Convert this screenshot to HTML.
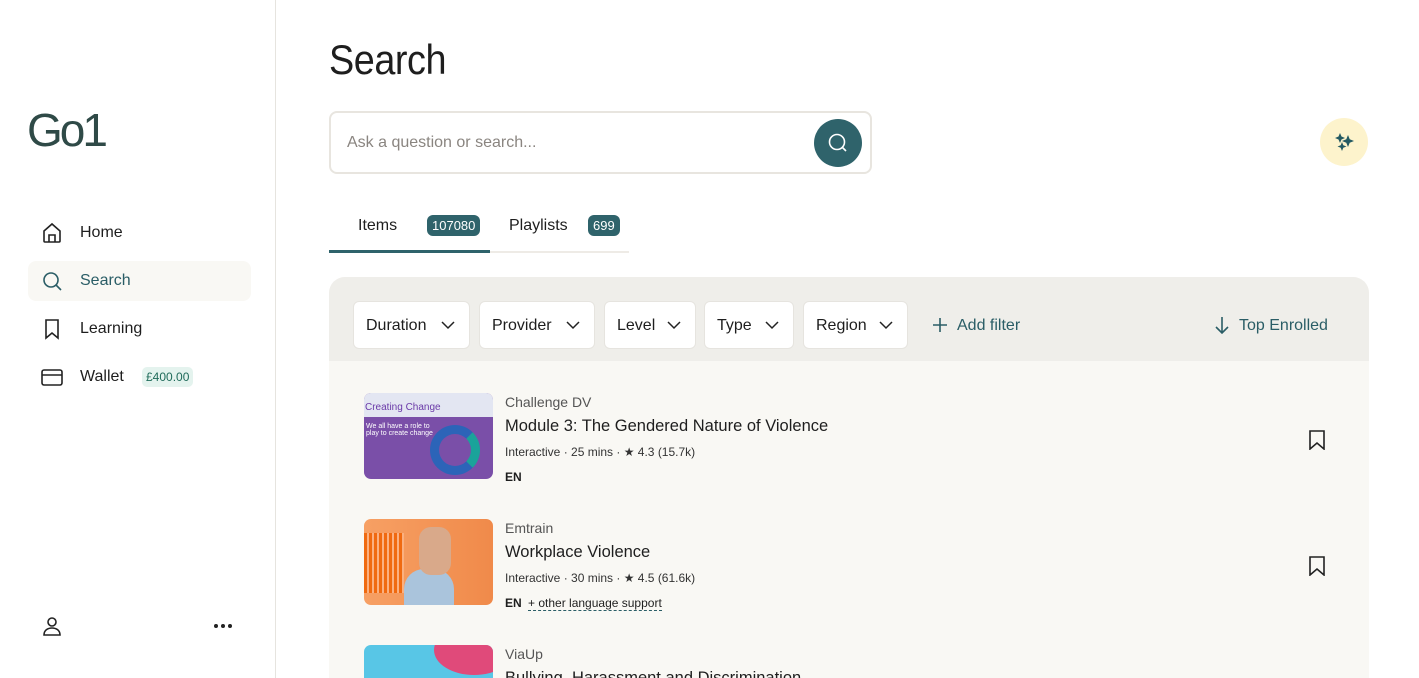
<!DOCTYPE html>
<html style="width:1419px;height:678px;overflow:hidden"><head><meta charset="utf-8"><style>
*{box-sizing:border-box;margin:0;padding:0}
body{width:1419px;height:678px;overflow:hidden;background:#fff;font-family:"Liberation Sans",sans-serif;color:#1e1e1e;position:relative}
.side{position:absolute;left:0;top:0;width:276px;height:678px;border-right:1px solid #e6e4df}
.logo{position:absolute;left:27px;top:103px;font-size:46px;color:#2f4a47;letter-spacing:-3px;font-weight:400}
.nav{position:absolute;left:28px;width:223px;height:40px;border-radius:8px;display:flex;align-items:center;font-size:16px}
.nav svg{position:absolute;left:12px}
.nav span.t{position:absolute;left:52px;top:11px}
.ab{position:absolute;}
h1{position:absolute;left:329px;top:36px;font-size:42px;font-weight:400;color:#1e1e1e;letter-spacing:-0.5px;transform:scaleX(.9);transform-origin:left}
.search{position:absolute;left:329px;top:111px;width:543px;height:63px;border:2px solid #e8e5df;border-radius:8px}
.search .ph{position:absolute;left:16px;top:21px;font-size:16px;color:#8a8580}
.search .btn{position:absolute;right:8px;top:6px;width:48px;height:48px;border-radius:50%;background:#2f636b}
.badge{background:#2f636b;color:#fff;font-size:13px;border-radius:6px;padding:3px 5px;position:absolute}
.panel{position:absolute;left:329px;top:277px;width:1040px;height:401px;border-radius:16px 16px 0 0;background:#f9f8f4;overflow:hidden}
.fbar{height:84px;background:#efeeea;position:relative}
.f{position:absolute;top:24px;height:48px;background:#fff;border:1px solid #e6e4df;border-radius:6px;font-size:16px;padding:0 0 0 12px;line-height:48px}
.f svg{position:absolute;right:14px;top:18px}
.item{position:absolute;left:35px}
.thumb{position:absolute;left:0;width:129px;height:86px;border-radius:7px;overflow:hidden}
.prov{position:absolute;left:141px;font-size:14px;color:#555}
.tit{position:absolute;left:141px;font-size:16.5px;color:#1e1e1e}
.meta{position:absolute;left:141px;font-size:12px;color:#333;white-space:nowrap}
.lang{position:absolute;left:141px;font-size:12px;font-weight:bold}
</style></head><body>
<div class="side">
 <div class="logo">Go1</div>
 <div class="nav" style="top:213px"><svg width="24" height="24" viewBox="0 0 24 24" fill="none" stroke="#222" stroke-width="1.6"><path d="M4 10l8-7 8 7v10a1 1 0 0 1-1 1H5a1 1 0 0 1-1-1z"/><path d="M9 21v-7h6v7"/></svg><span class="t">Home</span></div>
 <div class="nav" style="top:261px;background:#f9f8f4;color:#2a5d66"><svg width="24" height="24" viewBox="0 0 24 24" fill="none" stroke="#2a5d66" stroke-width="1.6"><circle cx="11" cy="11" r="7"/><path d="M16 16l5 5"/></svg><span class="t">Search</span></div>
 <div class="nav" style="top:309px"><svg width="24" height="24" viewBox="0 0 24 24" fill="none" stroke="#222" stroke-width="1.6"><path d="M6 3h12v18l-6-5-6 5z"/></svg><span class="t">Learning</span></div>
 <div class="nav" style="top:357px"><svg width="24" height="24" viewBox="0 0 24 24" fill="none" stroke="#222" stroke-width="1.6"><rect x="2" y="5" width="20" height="15" rx="2"/><path d="M2 10h20"/></svg><span class="t">Wallet</span><span style="position:absolute;left:114px;top:10px;background:#e4f3ee;color:#1f6b5a;font-size:12px;padding:3px 4px;border-radius:5px">£400.00</span></div>
 <svg class="ab" style="left:40px;top:614px" width="24" height="24" viewBox="0 0 24 24" fill="none" stroke="#222" stroke-width="1.6"><circle cx="12" cy="8" r="4"/><path d="M4 21c0-5 4-7 8-7s8 2 8 7z"/></svg>
 <svg class="ab" style="left:212px;top:620px" width="22" height="12"><circle cx="4" cy="6" r="2" fill="#222"/><circle cx="11" cy="6" r="2" fill="#222"/><circle cx="18" cy="6" r="2" fill="#222"/></svg>
</div>
<h1>Search</h1>
<div class="search"><div class="ph">Ask a question or search...</div><div class="btn"><svg width="48" height="48" viewBox="0 0 48 48" fill="none" stroke="#fff" stroke-width="1.6"><circle cx="23" cy="23" r="7.5"/><path d="M28.5 28.5l3.5 3.5"/></svg></div></div>
<div class="ab" style="left:1320px;top:118px;width:48px;height:48px;border-radius:50%;background:#fdf3cc"><svg width="48" height="48" viewBox="0 0 48 48" fill="#245a62"><path d="M20 15l1.5 3.5 3.5 1.5-3.5 1.5-1.5 3.5-1.5-3.5-3.5-1.5 3.5-1.5z"/><path d="M28 17l1.7 4.3 4.3 1.7-4.3 1.7-1.7 4.3-1.7-4.3-4.3-1.7 4.3-1.7z"/><path d="M22 24l1.3 3.2 3.2 1.3-3.2 1.3-1.3 3.2-1.3-3.2-3.2-1.3 3.2-1.3z"/></svg></div>
<div class="ab" style="left:358px;top:217px;font-size:16px">Items</div>
<div class="badge" style="left:427px;top:215px">107080</div>
<div class="ab" style="left:509px;top:217px;font-size:16px">Playlists</div>
<div class="badge" style="left:588px;top:215px">699</div>
<div class="ab" style="left:329px;top:251px;width:300px;height:2px;background:#eeebe6"></div>
<div class="ab" style="left:329px;top:250px;width:161px;height:3px;background:#2f636b"></div>
<div class="panel">
 <div class="fbar">
  <div class="f" style="left:24px;width:117px">Duration<svg width="14" height="10"><path d="M1 2l6 6 6-6" fill="none" stroke="#222" stroke-width="1.5"/></svg></div>
  <div class="f" style="left:150px;width:116px">Provider<svg width="14" height="10"><path d="M1 2l6 6 6-6" fill="none" stroke="#222" stroke-width="1.5"/></svg></div>
  <div class="f" style="left:275px;width:92px">Level<svg width="14" height="10"><path d="M1 2l6 6 6-6" fill="none" stroke="#222" stroke-width="1.5"/></svg></div>
  <div class="f" style="left:375px;width:90px">Type<svg width="14" height="10"><path d="M1 2l6 6 6-6" fill="none" stroke="#222" stroke-width="1.5"/></svg></div>
  <div class="f" style="left:474px;width:105px">Region<svg width="14" height="10"><path d="M1 2l6 6 6-6" fill="none" stroke="#222" stroke-width="1.5"/></svg></div>
  <svg class="ab" style="left:603px;top:40px" width="16" height="16" fill="none" stroke="#2a5d66" stroke-width="1.6"><path d="M8 1v14M1 8h14"/></svg>
  <div class="ab" style="left:628px;top:40px;font-size:16px;color:#2a5d66">Add filter</div>
  <svg class="ab" style="left:885px;top:39px" width="16" height="18" fill="none" stroke="#2a5d66" stroke-width="1.6"><path d="M8 1v16M2 11l6 6 6-6"/></svg>
  <div class="ab" style="left:910px;top:40px;font-size:16px;color:#2a5d66">Top Enrolled</div>
 </div>
 <div class="item" style="top:116px;width:1000px">
  <div class="thumb" style="top:0;background:#7a4fa8"><div style="height:24px;background:#e3e6f2;color:#6a3aa8;font-size:10px;padding:9px 0 0 1px">Creating Change</div><div style="position:absolute;left:66px;top:32px;width:50px;height:50px;border-radius:50%;border:9px solid #2c64b8;border-right-color:#1aa39a"></div><div style="position:absolute;left:2px;top:30px;color:#fff;font-size:7px">We all have a role to<br>play to create change</div></div>
  <div class="prov" style="top:1px">Challenge DV</div>
  <div class="tit" style="top:24px">Module 3: The Gendered Nature of Violence</div>
  <div class="meta" style="top:52px">Interactive · 25 mins · ★ 4.3 (15.7k)</div>
  <div class="lang" style="top:77px">EN</div>
  <svg class="ab" style="left:944px;top:37px" width="18" height="20" fill="none" stroke="#222" stroke-width="1.6"><path d="M2 1h14v18l-7-6-7 6z"/></svg>
 </div>
 <div class="item" style="top:242px;width:1000px">
  <div class="thumb" style="top:0;background:linear-gradient(90deg,#f7a064,#f08a4a)"><div style="position:absolute;left:0;top:14px;width:40px;height:60px;background:repeating-linear-gradient(90deg,#f06a10 0 3px,#fbb080 3px 5px)"></div><div style="position:absolute;left:40px;top:50px;width:50px;height:40px;background:#aac4dc;border-radius:20px 20px 0 0"></div><div style="position:absolute;left:55px;top:8px;width:32px;height:48px;background:#d9a98a;border-radius:12px"></div></div>
  <div class="prov" style="top:1px">Emtrain</div>
  <div class="tit" style="top:24px">Workplace Violence</div>
  <div class="meta" style="top:52px">Interactive · 30 mins · ★ 4.5 (61.6k)</div>
  <div class="lang" style="top:77px">EN <span style="font-weight:normal;border-bottom:1px dashed #2a5d66;margin-left:3px">+ other language support</span></div>
  <svg class="ab" style="left:944px;top:37px" width="18" height="20" fill="none" stroke="#222" stroke-width="1.6"><path d="M2 1h14v18l-7-6-7 6z"/></svg>
 </div>
 <div class="item" style="top:368px;width:1000px">
  <div class="thumb" style="top:0;background:#58c6e6"><div style="position:absolute;left:70px;top:-20px;width:80px;height:50px;border-radius:50%;background:#e04a7a"></div></div>
  <div class="prov" style="top:1px">ViaUp</div>
  <div class="tit" style="top:24px">Bullying, Harassment and Discrimination</div>
 </div>
</div>
</body></html>
